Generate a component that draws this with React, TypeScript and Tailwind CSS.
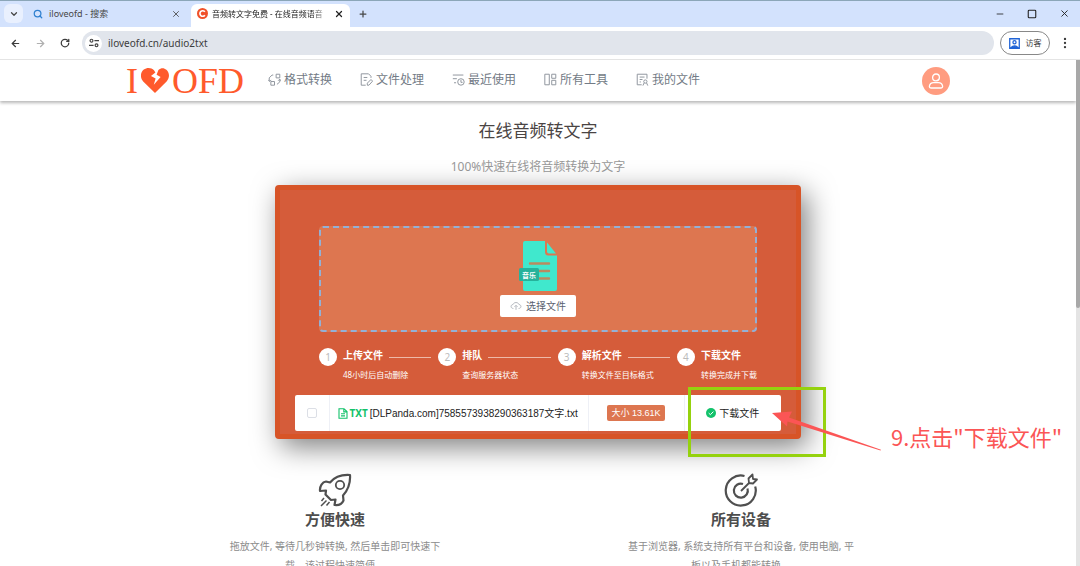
import type { ReactNode } from "react";
import {
  ArrowLeft,
  ArrowRight,
  ChevronDown,
  EllipsisVertical,
  Minus,
  Plus,
  RotateCw,
  Search,
  Square,
  X,
} from "lucide-react";

export default function App() {
  return (
    <div className="flex h-screen flex-col overflow-hidden bg-white font-['Noto_Sans','Noto_Sans_CJK_SC',sans-serif]">
      <TabStrip />
      <Toolbar />
      <div className="flex min-h-0 flex-1">
        <div className="flex min-w-0 flex-1 flex-col overflow-hidden">
          <SiteHeader />
          <main className="flex flex-col items-center">
            <h1 className="mt-4 text-[17px] leading-7 text-[#4a4444]">在线音频转文字</h1>
            <p className="mt-3 text-xs leading-5 text-[#999]">100%快速在线将音频转换为文字</p>
            <Converter />
            <Features />
          </main>
        </div>
        <div className="w-1 shrink-0 bg-[#e4e4e4]">
          <div className="h-[49%] rounded-b-xs bg-[#a8a8a8]" />
        </div>
      </div>
    </div>
  );
}

function TabStrip() {
  return (
    <div className="flex h-[27px] shrink-0 items-end border-t border-[#8ba6b8] bg-[#d3e2fd] text-[9px] text-[#474747]">
      <button
        type="button"
        aria-label="标签页"
        className="mb-1 ml-1 flex size-[19px] items-center justify-center rounded-md bg-[#e9f0fe]"
      >
        <ChevronDown className="size-2.5" strokeWidth={3} />
      </button>
      <div className="ml-2.5 flex h-[23px] w-[148px] items-center pb-1">
        <Search className="size-2.5 text-[#2f80d0]" strokeWidth={3} />
        <span className="ml-1.5 flex-1">iloveofd - 搜索</span>
        <button type="button" aria-label="关闭">
          <X className="size-2.5" strokeWidth={2} />
        </button>
      </div>
      <div className="ml-2.5 flex h-[23px] w-[159px] items-center rounded-t-md bg-white px-1.5 pb-1 text-[8px] text-[#222]">
        <svg viewBox="0 0 12 12" className="size-[11px] shrink-0">
          <circle cx="6" cy="6" r="6" fill="#f0512a" />
          <path d="M8.6 4.2A3 3 0 1 0 8.6 7.8" fill="none" stroke="#fff" strokeWidth="1.8" />
        </svg>
        <span className="ml-1 w-[118px] overflow-hidden whitespace-nowrap [mask-image:linear-gradient(to_right,#000_85%,transparent)]">
          音频转文字免费 - 在线音频语音
        </span>
        <button type="button" aria-label="关闭" className="ml-auto">
          <X className="size-2.5" strokeWidth={3} />
        </button>
      </div>
      <button type="button" aria-label="新标签页" className="mb-2 ml-2">
        <Plus className="size-2.5" strokeWidth={3} />
      </button>
      <div className="mr-2.5 mb-2 ml-auto flex items-center gap-[22px] text-[#222]">
        <button type="button" aria-label="最小化">
          <Minus className="size-2.5" />
        </button>
        <button type="button" aria-label="最大化">
          <Square className="size-2.5" strokeWidth={2.6} />
        </button>
        <button type="button" aria-label="关闭窗口">
          <X className="size-[11px]" strokeWidth={2} />
        </button>
      </div>
    </div>
  );
}

function Toolbar() {
  return (
    <div className="flex h-[33px] shrink-0 items-center border-b border-[#e4e4e4] bg-white text-[10px] text-[#3c3c3c]">
      <button type="button" aria-label="后退" className="ml-2.5">
        <ArrowLeft className="size-[11px]" strokeWidth={2.6} />
      </button>
      <button type="button" aria-label="前进" className="ml-3.5 text-[#b0b0b0]">
        <ArrowRight className="size-[11px]" strokeWidth={2.6} />
      </button>
      <button type="button" aria-label="刷新" className="ml-3.5">
        <RotateCw className="size-2.5" strokeWidth={3} />
      </button>
      <div className="ml-3 flex h-6 flex-1 items-center rounded-full bg-[#e1e5ec] pl-[3px]">
        <span className="flex size-[17px] items-center justify-center rounded-full bg-white">
          <svg viewBox="0 0 12 12" className="size-2.5" fill="none" stroke="#444" strokeWidth="1.4">
            <circle cx="3" cy="3.2" r="1.7" />
            <path d="M6.5 3.2H12M0 8.8H5.5" />
            <circle cx="9" cy="8.8" r="1.7" />
          </svg>
        </span>
        <input
          aria-label="网址"
          defaultValue="iloveofd.cn/audio2txt"
          className="ml-1.5 min-w-0 flex-1 bg-transparent text-[10px] outline-none"
        />
      </div>
      <button
        type="button"
        className="ml-1.5 flex h-6 w-[50px] items-center justify-center gap-1.5 rounded-full border border-[#888] text-[8px]"
      >
        <svg viewBox="0 0 12 12" className="size-[11px]" fill="none" stroke="#1f63d6" strokeWidth="1.4">
          <path d="M.8.8H11.2V11.2H.8Z" />
          <circle cx="6" cy="4.6" r="1.7" />
          <path d="M2 10.6Q6 6.6 10 10.6Z" fill="#1f63d6" />
        </svg>
        访客
      </button>
      <button type="button" aria-label="菜单" className="mr-2 ml-2">
        <EllipsisVertical className="size-3.5" strokeWidth={2} />
      </button>
    </div>
  );
}

function SiteHeader() {
  return (
    <header className="shrink-0 bg-white shadow-[0_2px_3px_rgba(0,0,0,0.28)]">
      <div className="mx-auto flex h-[41px] max-w-[824px] items-center">
        <a
          href="#"
          className="flex items-center gap-[3px] font-['Liberation_Serif',serif] text-[36px] leading-10 text-[#ff5a2c]"
        >
          <span>I</span>
          <svg viewBox="0 0 28 25" className="h-[25px] w-7">
            <path
              d="M14 25L2.2 13.4C-1.2 9.8-.6 4.2 2.8 1.6 6-.8 10.4-.4 13 2.2L14.4 4.4 10 8 14.6 10.600 12.8 16.800 19.600 9 15.600 6.800 17.400 2C20-.4 23-.4 25.400 1.800 28.800 5 28.800 10 25.600 13.400Z"
              fill="currentColor"
            />
          </svg>
          <span>OFD</span>
        </a>
        <nav className="ml-6 flex gap-7 text-xs text-[#737b86]">
          {navItems.map((item) => (
            <a key={item.label} href="#" className="flex h-5 items-center gap-[3px] pb-0.5">
              <svg
                viewBox="0 0 16 16"
                className="size-[13px] text-[#8f959d]"
                fill="none"
                stroke="currentColor"
                strokeWidth="1.2"
              >
                {item.icon}
              </svg>
              {item.label}
            </a>
          ))}
        </nav>
        <button
          type="button"
          aria-label="用户"
          className="ml-auto flex size-7 items-center justify-center rounded-full bg-[#ff9c80] text-white"
        >
          <svg viewBox="0 0 16 16" className="size-4" fill="none" stroke="currentColor" strokeWidth="1.3">
            <circle cx="8" cy="4.4" r="3.4" />
            <path d="M3.2 15H12.8C14 15 14.8 14.4 14.6 13.2 14.2 10.8 12.6 9.6 10.4 9.6H5.6C3.4 9.6 1.8 10.8 1.4 13.2 1.2 14.4 2 15 3.2 15Z" />
          </svg>
        </button>
      </div>
    </header>
  );
}

function Converter() {
  return (
    <section className="relative mt-2 w-[526px] rounded-sm border-[5px] border-[#d75427] bg-[#d55c3a] px-[15px] pt-9 pb-[3px] shadow-[6px_8px_28px_rgba(0,0,0,0.5)]">
      <div className="mx-6 flex h-[106px] flex-col items-center rounded-sm border-2 border-dashed border-[#93b0d6] bg-[#dd7650] pt-[13px]">
        <svg viewBox="0 0 38 50" className="h-[50px] w-[38px]">
          <path
            d="M6 0H26V11Q26 14.500 29.500 14.500H38V48Q38 50 36 50H6Q4 50 4 48V2Q4 0 6 0Z"
            fill="#40e8cd"
          />
          <path d="M28 1.500L37 12.500H30Q28 12.500 28 10.500Z" fill="#40e8cd" />
          <path d="M11 22.500H30M11 30H30M11 37.500H30" stroke="#b98a60" strokeWidth="2.400" strokeLinecap="round" />
          <rect x="0" y="27" width="20" height="13" rx="1.500" fill="#26b29b" />
          <text x="10" y="36.500" textAnchor="middle" fontSize="7" fontWeight="700" fill="#fff">
            音乐
          </text>
        </svg>
        <button
          type="button"
          className="mt-1 flex h-[22px] w-[76px] shrink-0 items-center justify-center gap-1 rounded-xs bg-white text-[10px] text-[#5b6270]"
        >
          <svg viewBox="0 0 12 10" className="h-2.5 w-3" fill="none" stroke="#b4b8bf" strokeWidth="1">
            <path d="M3.400 7.500C.4 7.400.3 3.800 3 3.500 3.800.9 8.200.9 9 3.500 11.700 3.800 11.600 7.400 8.600 7.500M6 8.800V4.500M4.500 5.800L6 4.300L7.500 5.800" />
          </svg>
          选择文件
        </button>
      </div>

      <ol className="mx-6 mt-3.5 flex text-white">
        {steps.map((step, i) => (
          <li key={step.title} className="flex not-last:flex-1">
            <span className="mt-0.5 flex size-[18px] shrink-0 items-center justify-center rounded-full bg-white text-[10px] text-[#bbb]">
              {i + 1}
            </span>
            <div className="ml-1.5 min-w-0 flex-1 whitespace-nowrap">
              <div className="flex items-center gap-1.5">
                <h2 className="text-[10px] leading-[18px] font-bold">{step.title}</h2>
                {i < steps.length - 1 && <div className="mt-1 mr-[7px] h-px flex-1 bg-[#eeb9a8]" />}
              </div>
              <p className="mt-[3px] text-[8px] leading-4">{step.text}</p>
            </div>
          </li>
        ))}
      </ol>

      <div className="mt-3 overflow-hidden rounded-xs bg-white">
        <table className="h-9 w-full table-fixed text-[10px] text-[#222]">
          <tbody>
            <tr className="divide-x divide-[#eef0f6]">
              <td className="w-[34px]">
                <input
                  type="checkbox"
                  aria-label="选择"
                  className="mx-auto block size-2.5 appearance-none rounded-xs border border-[#dcdfe6] bg-white"
                />
              </td>
              <td className="w-[259px] pl-2">
                <div className="flex items-center gap-0.5 font-['Liberation_Sans','Noto_Sans_CJK_SC',sans-serif] whitespace-nowrap">
                  <svg viewBox="0 0 10 11" className="h-[11px] w-2.5" fill="none" stroke="#13c26b" strokeWidth="1.100">
                    <path d="M1 .8H6L9 3.600V10.200H1ZM5.800 1V3.900H9M3 5.700H7M3 7.900H7" />
                  </svg>
                  <b className="font-['Noto_Sans',sans-serif] text-[#13c26b]">TXT</b>
                  <span>[DLPanda.com]7585573938290363187文字.txt</span>
                </div>
              </td>
              <td className="w-24 text-center">
                <span className="inline-block w-[58px] rounded-xs bg-[#dd7650] font-['Liberation_Sans','Noto_Sans_CJK_SC',sans-serif] text-[9px] leading-4 text-white">
                  大小 13.61K
                </span>
              </td>
              <td>
                <button type="button" className="mx-auto flex items-center gap-[3px]">
                  <svg viewBox="0 0 10 10" className="size-2.5">
                    <circle cx="5" cy="5" r="5" fill="#13c26b" />
                    <path d="M2.700 5.100L4.400 6.700L7.400 3.600" fill="none" stroke="#fff" strokeWidth="1" />
                  </svg>
                  下载文件
                </button>
              </td>
            </tr>
          </tbody>
        </table>
      </div>

      <Annotation />
    </section>
  );
}

// Tutorial overlay pinned to the bottom right corner of the converter card
function Annotation() {
  return (
    <div className="pointer-events-none absolute top-[197px] left-[408px] h-[70px] w-[138px] border-[3px] border-[#95d20e]">
      <svg viewBox="0 0 110 40" className="absolute top-[21px] left-[81px] h-10 w-[110px]">
        <path d="M0 2L20 .5L17 6.500L109 38.700L108.500 39.500L15.500 10.500L15 15.500Z" fill="#fb5555" />
      </svg>
      <p className="absolute top-[30px] left-[200px] font-['Noto_Sans_CJK_SC',sans-serif] text-[22px] leading-8 whitespace-nowrap text-[#fb5555]">
        9.点击"下载文件"
      </p>
    </div>
  );
}

function Features() {
  return (
    <div className="mt-[34px] grid w-full max-w-[812px] grid-cols-2">
      {features.map((feature) => (
        <article key={feature.title} className="flex flex-col items-center text-center">
          <svg
            viewBox="0 0 34 34"
            className="size-[34px] text-[#505050]"
            fill="none"
            stroke="currentColor"
            strokeWidth="2.2"
            strokeLinejoin="round"
          >
            {feature.icon}
          </svg>
          <h2 className="text-[15px] leading-6 font-bold text-[#4d4d4d]">{feature.title}</h2>
          <p className="mt-1.5 w-[228px] text-[10px] leading-[19px] text-[#8c8c8c]">
            {feature.lines[0]}
            <br />
            {feature.lines[1]}
          </p>
        </article>
      ))}
    </div>
  );
}

const navItems: { label: string; icon: ReactNode }[] = [
  {
    label: "格式转换",
    icon: (
      <path d="M6.500 2.500H5L1.500 6V10M.5 8.500L2 10.500 4 8.500M10 1.500H14.500V6H10ZM3.500 10.500H8V15H3.500ZM14.500 8V11L11 14M12.500 9.500L14.500 7.500 15.500 9.500" />
    ),
  },
  {
    label: "文件处理",
    icon: <path d="M13.500 6V4L10.500 1H1.500V15H7M4.500 5.500H9M4.500 9H8M9 15V12.500L13.500 8 15.500 10 11 15Z" />,
  },
  {
    label: "最近使用",
    icon: (
      <>
        <path d="M1 2.500H14M1 7H6M2.500 12H5M11 8.500V11.500H13" />
        <circle cx="11" cy="11" r="4" />
      </>
    ),
  },
  {
    label: "所有工具",
    icon: <path d="M1 1.500H6.500V14.500H1ZM9.500 1.500H14.500V6.500H9.500ZM9.500 9H14.500V14.500H9.500Z" />,
  },
  {
    label: "我的文件",
    icon: (
      <>
        <path d="M7 14.500H1.500V1.500H13.500V7M4.500 5H10.500M4.500 8H8M4.500 11H6M8.500 15.500 10 12.200M14.500 15.500 13 12.200" />
        <circle cx="11.500" cy="10.500" r="2" />
      </>
    ),
  },
];

const steps = [
  { title: "上传文件", text: "48小时后自动删除" },
  { title: "排队", text: "查询服务器状态" },
  { title: "解析文件", text: "转换文件至目标格式" },
  { title: "下载文件", text: "转换完成并下载" },
];

const features: { title: string; lines: string[]; icon: ReactNode }[] = [
  {
    title: "方便快速",
    lines: ["拖放文件, 等待几秒钟转换, 然后单击即可快速下", "载。该过程快速简便。"],
    icon: (
      <>
        <path d="M12 9.500C17 3.500 25 1.500 32 2 32.500 9 30 17 25 22.500L25.500 27.500C24 31 20.500 32.500 16.500 32L17.500 26.500 13 27 7.500 21.500 8 17.500 2 18C1.500 13 4.500 9 8 8.500Z" />
        <circle cx="22" cy="12" r="4.200" strokeWidth="1.800" />
        <path d="M6 25L3.500 28M8.500 27.500L3 33M11.500 29L8.500 32.500" strokeWidth="1.500" />
      </>
    ),
  },
  {
    title: "所有设备",
    lines: ["基于浏览器, 系统支持所有平台和设备, 使用电脑, 平", "板以及手机都能转换。"],
    icon: (
      <>
        <path d="M20.500 3A15 15 0 1 0 31.200 13.500" />
        <path d="M19 11A7 7 0 1 0 23.500 15.500" />
        <path d="M17 18L25 10M25 10L24.500 5.500 28.500 1.500 29 6 33 6.500 29 10.500Z" strokeWidth="1.800" />
      </>
    ),
  },
];
